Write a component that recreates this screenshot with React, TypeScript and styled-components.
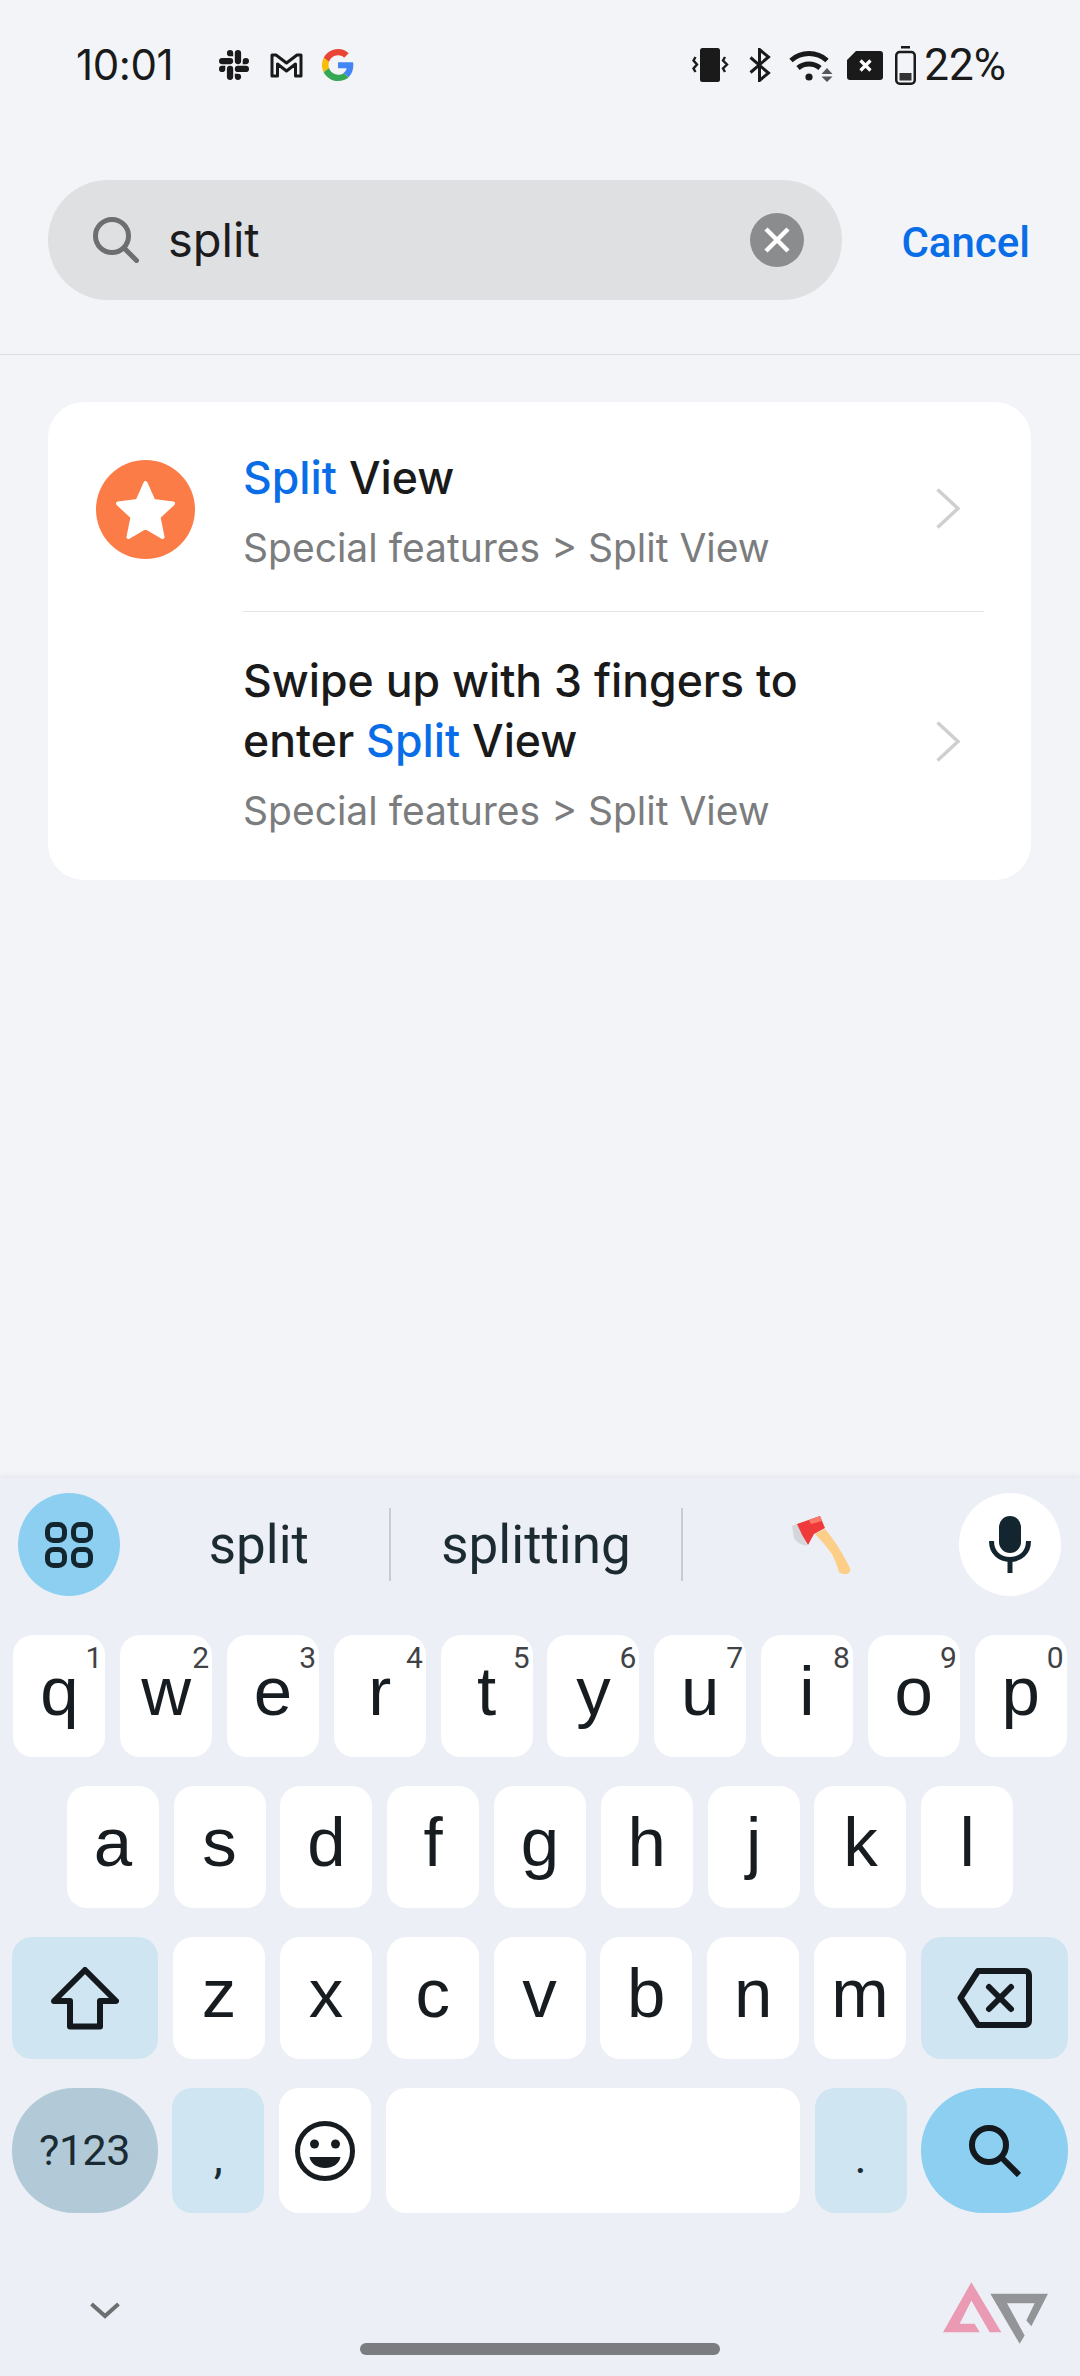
import React from "react";
import styled, { createGlobalStyle } from "styled-components";
import { SiSlack } from "react-icons/si";

const GlobalStyle = createGlobalStyle`
  html, body {
    margin: 0;
    padding: 0;
    background: #f2f4f7;
  }
  * {
    box-sizing: border-box;
  }
`;

const Page = styled.div`
  width: 1080px;
  height: 2376px;
  display: flex;
  flex-direction: column;
  overflow: hidden;
  background: #f2f4f7;
  font-family: Inter, "Liberation Sans", sans-serif;
  color: #1a1a1b;
`;

const Header = styled.header`
  height: 355px;
  border-bottom: 1px solid #dcdee1;
`;

const StatusBar = styled.div`
  height: 130px;
  padding: 0 74px 0 76px;
  display: flex;
  align-items: center;
  justify-content: space-between;
`;

const StatusGroup = styled.div`
  display: flex;
  align-items: center;
`;

const StatusClock = styled.span`
  font-size: 42px;
  line-height: 48px;
  letter-spacing: -0.4px;
  margin-right: 46px;
`;

const StatusLevel = styled.span`
  font-family: Roboto, sans-serif;
  font-size: 44px;
  line-height: 48px;
`;

const StatusIcon = styled.svg<{ $gap?: number }>`
  display: block;
  flex: none;
  margin-right: ${(p) => p.$gap ?? 0}px;
`;

const SearchRow = styled.div`
  padding: 50px 50px 0 48px;
  display: flex;
  align-items: center;
  justify-content: space-between;
`;

const SearchBar = styled.div`
  width: 794px;
  height: 120px;
  border-radius: 60px;
  background: #dfe0e2;
  display: flex;
  align-items: center;
  padding: 0 38px 0 45px;
`;

const SearchText = styled.span`
  flex: 1;
  margin-left: 29px;
  font-size: 47px;
  line-height: 60px;
  color: #1c1c1e;
`;

const ClearButton = styled.div`
  width: 54px;
  height: 54px;
  border-radius: 50%;
  background: #8b8c8e;
  display: flex;
  align-items: center;
  justify-content: center;
`;

const CancelLink = styled.span`
  margin-top: 5px;
  font-family: Roboto, sans-serif;
  font-weight: 500;
  font-size: 42px;
  line-height: 50px;
  color: #0a6de8;
`;

const Card = styled.section`
  margin: 47px 49px 0 48px;
  height: 478px;
  border-radius: 36px;
  background: #fff;
`;

const ResultRow = styled.div`
  display: flex;
  padding-left: 48px;
`;

const IconSlot = styled.div`
  width: 99px;
  margin-right: 48px;
  flex: none;
`;

const BadgeIcon = styled.div`
  width: 99px;
  height: 99px;
  margin-top: 58px;
  border-radius: 50%;
  background: #fb7c47;
  display: flex;
  align-items: center;
  justify-content: center;
`;

const ResultBody = styled.div<{ $top: number; $bottom: number; $divider?: boolean }>`
  flex: 1;
  margin-right: 47px;
  padding: ${(p) => p.$top}px 24px ${(p) => p.$bottom}px 0;
  display: flex;
  align-items: center;
  justify-content: space-between;
  border-bottom: ${(p) => (p.$divider ? "1px solid #e3e4e6" : "none")};
`;

const ResultTitle = styled.div`
  font-weight: 500;
  font-size: 44.6px;
  line-height: 60px;
  color: #1a1a1b;
`;

const Match = styled.span`
  color: #0a6de8;
`;

const ResultPath = styled.div`
  margin-top: 15px;
  font-size: 39px;
  line-height: 50px;
  color: #7b7c7e;
`;

const Chevron = styled.svg<{ $nudge: number }>`
  display: block;
  flex: none;
  margin-top: ${(p) => p.$nudge}px;
`;

const Spacer = styled.div`
  flex: 1;
`;

const Keyboard = styled.div`
  position: relative;
  height: 898px;
  background: #ecf0f6;
  box-shadow: 0 -2px 5px rgba(0, 0, 0, 0.06);
  padding-top: 15px;
`;

const SuggestionStrip = styled.div`
  display: flex;
  align-items: center;
  padding: 0 19px 0 18px;
  margin-bottom: 39px;
`;

const RoundButton = styled.div<{ $bg: string }>`
  width: 102px;
  height: 103px;
  flex: none;
  border-radius: 50%;
  background: ${(p) => p.$bg};
  display: flex;
  align-items: center;
  justify-content: center;
`;

const Suggestion = styled.div<{ $width: number; $inset?: number; $divider?: boolean }>`
  width: ${(p) => p.$width}px;
  height: 73px;
  padding-left: ${(p) => p.$inset ?? 0}px;
  display: flex;
  align-items: center;
  justify-content: center;
  font-family: Roboto, sans-serif;
  font-size: 53px;
  color: #1c2a31;
  border-right: ${(p) => (p.$divider ? "2px solid #c8ccd1" : "none")};
`;

const KeyRows = styled.div`
  display: flex;
  flex-direction: column;
  gap: 29px;
`;

const KeyRow = styled.div`
  display: flex;
  justify-content: center;
  gap: 14.8px;
`;

const Key = styled.div<{ $w?: number; $h?: number; $tone?: "plain" | "soft" | "strong" | "slate"; $round?: boolean }>`
  position: relative;
  width: ${(p) => p.$w ?? 92}px;
  height: ${(p) => p.$h ?? 122}px;
  flex: none;
  border-radius: ${(p) => (p.$round ? "62px" : "20px")};
  background: ${(p) =>
    p.$tone === "soft" ? "#cfe5f2" : p.$tone === "strong" ? "#8ccff0" : p.$tone === "slate" ? "#b2c9d7" : "#fff"};
  display: flex;
  align-items: center;
  justify-content: center;
  font-family: Roboto, sans-serif;
  font-size: 66px;
  line-height: 1;
  color: #161c20;
`;

const Letter = styled.span`
  margin-top: -10px;
  font-family: "Liberation Sans", sans-serif;
  font-size: 69px;
`;

const Hint = styled.span`
  position: absolute;
  top: 8px;
  right: 3px;
  font-size: 30px;
  line-height: 30px;
  color: #3f4346;
`;

const SymbolsLabel = styled.span`
  font-size: 43px;
  letter-spacing: -0.5px;
  color: #1b2b33;
`;

const Punctuation = styled.span`
  font-size: 46px;
  margin-top: 12px;
  color: #1b2b33;
`;

const CollapseIcon = styled.svg`
  display: block;
  margin: 89px 0 24px 90px;
`;

const HomePill = styled.div`
  width: 360px;
  height: 12px;
  margin: 0 auto;
  border-radius: 6px;
  background: #7a7c80;
`;

const Watermark = styled.svg`
  position: absolute;
  left: 943px;
  top: 804px;
`;

const topRow: [string, string][] = [
  ["q", "1"],
  ["w", "2"],
  ["e", "3"],
  ["r", "4"],
  ["t", "5"],
  ["y", "6"],
  ["u", "7"],
  ["i", "8"],
  ["o", "9"],
  ["p", "0"],
];

const ResultChevron = ({ nudge }: { nudge: number }) => (
  <Chevron $nudge={nudge} width="24" height="41" viewBox="0 0 24 41" fill="none">
    <path d="M1.5 1.5 L22 20.5 L1.5 39.5" stroke="#cfcfd1" strokeWidth="3.5" />
  </Chevron>
);

const App = () => (
  <Page>
    <GlobalStyle />
    <Header>
      <StatusBar>
        <StatusGroup>
          <StatusClock>10:01</StatusClock>
          <SiSlack size={30} color="#1a1a1b" style={{ marginRight: 21 }} />
          <StatusIcon $gap={19} width="33" height="25" viewBox="0 0 33 25" fill="none">
            <path
              d="M2 2 H6 L16.5 10 L27 2 H31 V23 H25.5 V11 L16.5 18 L7.5 11 V23 H2 Z"
              stroke="#1a1a1b"
              strokeWidth="3"
              strokeLinejoin="round"
            />
          </StatusIcon>
          <StatusIcon width="32" height="32" viewBox="0 0 48 48">
            <path fill="#EA4335" d="M24 9.5c3.54 0 6.71 1.22 9.21 3.6l6.85-6.85C35.9 2.38 30.47 0 24 0 14.62 0 6.51 5.38 2.56 13.22l7.98 6.19C12.43 13.72 17.74 9.5 24 9.5z" />
            <path fill="#4285F4" d="M46.98 24.55c0-1.57-.15-3.09-.38-4.55H24v9.02h12.94c-.58 2.96-2.26 5.48-4.78 7.18l7.73 6c4.51-4.18 7.09-10.36 7.09-17.65z" />
            <path fill="#FBBC05" d="M10.53 28.59c-.48-1.45-.76-2.99-.76-4.59s.27-3.14.76-4.59l-7.98-6.19C.92 16.46 0 20.12 0 24c0 3.88.92 7.54 2.56 10.78l7.97-6.19z" />
            <path fill="#34A853" d="M24 48c6.48 0 11.93-2.13 15.89-5.81l-7.73-6c-2.15 1.45-4.92 2.3-8.16 2.3-6.26 0-11.57-4.22-13.47-9.91l-7.98 6.19C6.51 42.62 14.62 48 24 48z" />
          </StatusIcon>
        </StatusGroup>
        <StatusGroup>
          <StatusIcon $gap={20} width="37" height="34" viewBox="0 0 37 34" fill="none">
            <rect x="8" y="0" width="20" height="34" rx="2.5" fill="#1a1a1b" />
            <path d="M3.5 9 L1.5 12.5 L5 16.5 L1.5 20.5 L3.5 24" stroke="#1a1a1b" strokeWidth="2.4" />
            <path d="M33 9 L31 12.5 L35 16.5 L31 20.5 L33 24" stroke="#1a1a1b" strokeWidth="2.4" />
          </StatusIcon>
          <StatusIcon $gap={18} width="22" height="34" viewBox="0 0 22 34" fill="none">
            <path d="M1.5 9.5 L19.5 25 L10.5 32.5 V1.5 L19.5 9 L1.5 24.5" stroke="#1a1a1b" strokeWidth="3" />
          </StatusIcon>
          <StatusIcon $gap={13} width="45" height="34" viewBox="0 0 45 34" fill="none">
            <path d="M2 12.5 A27 27 0 0 1 38 12.5" stroke="#1a1a1b" strokeWidth="5" />
            <path d="M9 20 A17 17 0 0 1 31 20" stroke="#1a1a1b" strokeWidth="5" />
            <circle cx="20" cy="29" r="3.6" fill="#1a1a1b" />
            <path d="M38 20 L43.5 26 H32.5 Z M32.5 28.5 H43.5 L38 34 Z" fill="#55575a" />
          </StatusIcon>
          <StatusIcon $gap={12} width="36" height="29" viewBox="0 0 36 29" fill="none">
            <path d="M9 0 H33 a3 3 0 0 1 3 3 V26 a3 3 0 0 1 -3 3 H3 a3 3 0 0 1 -3 -3 V9 Z" fill="#1a1a1b" />
            <path d="M13.5 9.5 L23.5 19.5 M23.5 9.5 L13.5 19.5" stroke="#fff" strokeWidth="3.2" />
          </StatusIcon>
          <StatusIcon $gap={8} width="21" height="39" viewBox="0 0 21 39" fill="none">
            <rect x="6" y="0" width="9" height="2.5" fill="#1a1a1b" />
            <rect x="1.25" y="6" width="18.5" height="31.75" rx="3.5" stroke="#1a1a1b" strokeWidth="2.5" />
            <rect x="4.5" y="27" width="12" height="7.5" fill="#333" />
          </StatusIcon>
          <StatusLevel>22%</StatusLevel>
        </StatusGroup>
      </StatusBar>
      <SearchRow>
        <SearchBar>
          <svg width="46" height="46" viewBox="0 0 46 46" fill="none">
            <circle cx="19" cy="19" r="16.5" stroke="#6d6e70" strokeWidth="5" />
            <path d="M31 31 L43.5 43.5" stroke="#6d6e70" strokeWidth="5" strokeLinecap="round" />
          </svg>
          <SearchText>split</SearchText>
          <ClearButton>
            <svg width="26" height="26" viewBox="0 0 26 26" fill="none">
              <path d="M2 2 L24 24 M24 2 L2 24" stroke="#fff" strokeWidth="4.5" />
            </svg>
          </ClearButton>
        </SearchBar>
        <CancelLink>Cancel</CancelLink>
      </SearchRow>
    </Header>
    <Card>
      <ResultRow>
        <IconSlot>
          <BadgeIcon>
            <svg width="59" height="58" viewBox="0 0 59 58">
              <path
                d="M29.5 2 L37.5 20 L57 22.5 L42.5 36 L46.5 56 L29.5 46 L12.5 56 L16.5 36 L2 22.5 L21.5 20 Z"
                fill="#fff"
                stroke="#fff"
                strokeWidth="4"
                strokeLinejoin="round"
              />
            </svg>
          </BadgeIcon>
        </IconSlot>
        <ResultBody $top={46} $bottom={38} $divider>
          <div>
            <ResultTitle>
              <Match>Split</Match> View
            </ResultTitle>
            <ResultPath>Special features &gt; Split View</ResultPath>
          </div>
          <ResultChevron nudge={-4} />
        </ResultBody>
      </ResultRow>
      <ResultRow>
        <IconSlot />
        <ResultBody $top={39} $bottom={44}>
          <div>
            <ResultTitle>
              Swipe up with 3 fingers to
              <br />
              enter <Match>Split</Match> View
            </ResultTitle>
            <ResultPath>Special features &gt; Split View</ResultPath>
          </div>
          <ResultChevron nudge={-5} />
        </ResultBody>
      </ResultRow>
    </Card>
    <Spacer />
    <Keyboard>
      <SuggestionStrip>
        <RoundButton $bg="#8ccff0">
          <svg width="48" height="46" viewBox="0 0 48 46" fill="none" stroke="#13262f" strokeWidth="5">
            <rect x="2.5" y="2.5" width="17" height="16" rx="6" />
            <rect x="28.5" y="2.5" width="17" height="16" rx="6" />
            <rect x="2.5" y="27.5" width="17" height="16" rx="6" />
            <rect x="28.5" y="27.5" width="17" height="16" rx="6" />
          </svg>
        </RoundButton>
        <Suggestion $width={271} $inset={9} $divider>split</Suggestion>
        <Suggestion $width={293} $divider>splitting</Suggestion>
        <Suggestion $width={276}>
          <svg width="59" height="58" viewBox="0 0 59 58">
            <path d="M23 18 L33 13 Q46 28 58 52 Q59 57 55 58 Q48 58 47 56 Q44 46 40 38 Q32 27 23 18 Z" fill="#fdce88" />
            <path d="M0 10 L7 7 L15 30 Q5 28 2 22 Z" fill="#d5d6dc" />
            <path d="M5 8 L28 0 L33 12 L22 18 L16 29 Q10 20 5 8 Z" fill="#f0393a" />
            <path d="M17 4 L28 0 L30 5 L19 8 Z" fill="#f77a6b" />
          </svg>
        </Suggestion>
        <RoundButton $bg="#fff">
          <svg width="42" height="57" viewBox="0 0 42 57" fill="none">
            <rect x="10" y="0" width="22" height="37" rx="11" fill="#13262f" />
            <path d="M2.5 25 C2.5 37 11 43.5 21 43.5 C31 43.5 39.5 37 39.5 25" stroke="#13262f" strokeWidth="5" />
            <path d="M21 43 V57" stroke="#13262f" strokeWidth="5" />
          </svg>
        </RoundButton>
      </SuggestionStrip>
      <KeyRows>
        <KeyRow>
          {topRow.map(([letter, digit]) => (
            <Key key={letter}>
              <Letter>{letter}</Letter>
              <Hint>{digit}</Hint>
            </Key>
          ))}
        </KeyRow>
        <KeyRow>
          {"asdfghjkl".split("").map((letter) => (
            <Key key={letter}>
              <Letter>{letter}</Letter>
            </Key>
          ))}
        </KeyRow>
        <KeyRow>
          <Key $w={146} $tone="soft">
            <svg width="68" height="63" viewBox="0 0 68 63" fill="none">
              <path
                d="M34 3 L65 34 H49 V59.5 H19 V34 H3 Z"
                stroke="#13191d"
                strokeWidth="6"
                strokeLinejoin="round"
              />
            </svg>
          </Key>
          {"zxcvbnm".split("").map((letter) => (
            <Key key={letter}>
              <Letter>{letter}</Letter>
            </Key>
          ))}
          <Key $w={147} $tone="soft">
            <svg width="75" height="60" viewBox="0 0 75 60" fill="none">
              <path
                d="M21 3 H68 a4 4 0 0 1 4 4 V53 a4 4 0 0 1 -4 4 H21 L3.5 30 Z"
                stroke="#13191d"
                strokeWidth="6"
                strokeLinejoin="round"
              />
              <path d="M32 19 L54 41 M54 19 L32 41" stroke="#13191d" strokeWidth="6" strokeLinecap="round" />
            </svg>
          </Key>
        </KeyRow>
        <KeyRow>
          <Key $w={146} $h={125} $tone="slate" $round>
            <SymbolsLabel>?123</SymbolsLabel>
          </Key>
          <Key $h={125} $tone="soft">
            <Punctuation>,</Punctuation>
          </Key>
          <Key $h={125}>
            <svg width="60" height="60" viewBox="0 0 60 60" fill="none">
              <circle cx="30" cy="30" r="27.5" stroke="#161c20" strokeWidth="5" />
              <circle cx="19.5" cy="23" r="4.5" fill="#161c20" />
              <circle cx="40.5" cy="23" r="4.5" fill="#161c20" />
              <path d="M14.5 36 H45.5 C44 43 38 47 30 47 C22 47 16 43 14.5 36 Z" fill="#161c20" />
            </svg>
          </Key>
          <Key $w={414} $h={125} />
          <Key $h={125} $tone="soft">
            <Punctuation>.</Punctuation>
          </Key>
          <Key $w={147} $h={125} $tone="strong" $round>
            <svg width="52" height="52" viewBox="0 0 52 52" fill="none">
              <circle cx="20" cy="20" r="17" stroke="#13191d" strokeWidth="6" />
              <path d="M32 32 L50 50" stroke="#13191d" strokeWidth="6" />
            </svg>
          </Key>
        </KeyRow>
      </KeyRows>
      <CollapseIcon width="30" height="17" viewBox="0 0 30 17" fill="none">
        <path d="M1.5 2 L15 14 L28.5 2" stroke="#6d6e70" strokeWidth="4" />
      </CollapseIcon>
      <HomePill />
      <Watermark width="105" height="62" viewBox="70 65 315 185">
        <path d="M155 65 L245 215 H210 L155 120 L120 190 H165 L180 215 H70 Z" fill="#ea9ab3" />
        <path d="M212 100 H385 L335 197 L320 180 L345 128 H262 L315 225 L300 250 Z" fill="#929497" />
      </Watermark>
    </Keyboard>
  </Page>
);

export default App;
